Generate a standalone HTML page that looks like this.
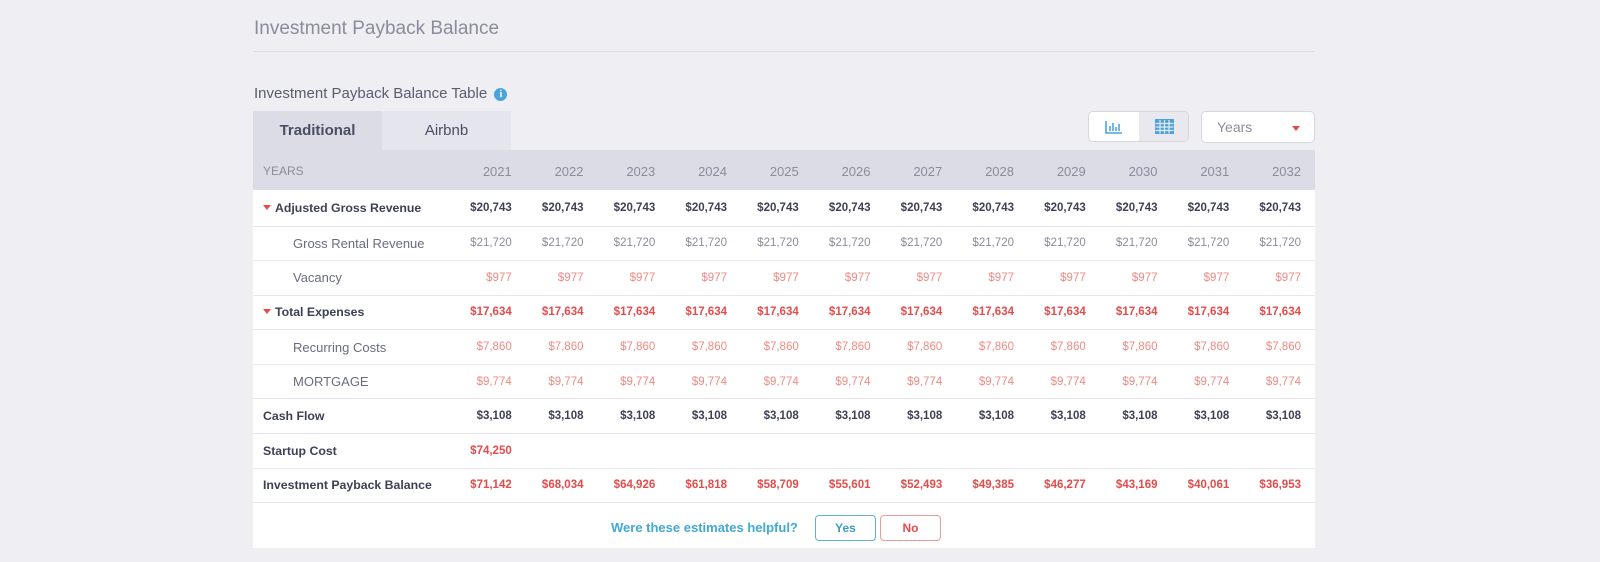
<!DOCTYPE html>
<html><head><meta charset="utf-8"><style>
*{margin:0;padding:0;box-sizing:border-box}
body{width:1600px;height:562px;background:#eeeef3;font-family:"Liberation Sans",sans-serif;position:relative;overflow:hidden;color:#4a4d63}
.h1{position:absolute;left:254px;top:18px;font-size:19px;color:#8a8c9c}
.hr{position:absolute;left:253px;top:51px;width:1062px;height:1px;background:#dcdce2}
.h2{position:absolute;left:254px;top:85px;font-size:15px;color:#5a5c70}
.info{display:inline-block;width:13px;height:13px;border-radius:50%;background:#4aa3dd;color:#fff;font-size:10px;font-weight:bold;text-align:center;line-height:13px;vertical-align:1px;margin-left:3px;font-family:"Liberation Serif",serif}
.tab{position:absolute;top:111px;height:39px;width:129px;text-align:center;line-height:39px;font-size:15px}
.t1{left:253px;background:#dcdce6;font-weight:bold;color:#4a4d63}
.t2{left:382px;background:#e5e5ed;color:#4a4d63}
.tg{position:absolute;left:1088px;top:111px;width:101px;height:31px;border:1px solid #d6d6de;border-radius:5px;background:#fff;overflow:hidden}
.tg .b{position:absolute;left:50px;top:0;width:51px;height:31px;background:#e8e8ee}
.sel{position:absolute;left:1201px;top:111px;width:114px;height:32px;border:1px solid #d6d6de;border-radius:5px;background:#fff;font-size:14px;color:#8a8c9c;line-height:30px;padding-left:15px}
.sel:after{content:"";position:absolute;right:14px;top:14px;border:4px solid transparent;border-top:5px solid #e64b4b}
table{position:absolute;left:253px;top:150px;width:1062px;border-collapse:collapse;background:#fff;table-layout:fixed}
td{height:34.6px;border-bottom:1px solid #e6e6ec;font-size:11.5px;text-align:right;font-weight:bold;color:#3e4156;white-space:nowrap}
td:first-child{text-align:left;padding-left:10px;font-size:12.3px;width:187px}
td:last-child{padding-right:14px;width:85.75px}
tr.hd td{background:#dcdce6;height:40px;font-weight:normal;color:#8a8c9c;font-size:13px;border:none;padding-top:2px}
tr.hd td:first-child{font-size:12px}
tr.first td{height:36px}
.sub td{font-weight:normal;color:#8a8c9c}
.sub td:first-child{padding-left:40px;color:#6a6c80;font-size:13px}
.red td{color:#e64b4b}.red td:first-child{color:#3e4156}
.lred td{color:#f08a84}
.tri{display:inline-block;border:4px solid transparent;border-top:5px solid #e64b4b;vertical-align:-2px;margin-right:4px}
.foot{position:absolute;left:253px;top:503px;width:1062px;height:45px;background:#fff}
.q{position:absolute;left:611px;top:520px;font-size:13px;font-weight:bold;color:#40a9d6}
.btn{position:absolute;top:515px;width:61px;height:26px;border-radius:4px;font-size:12px;font-weight:bold;text-align:center;line-height:24px}
.yes{left:815px;border:1px solid #5ab8c8;color:#3a9cc8}
.no{left:880px;border:1px solid #ee9a96;color:#e64b4b}
</style></head><body>
<div class="h1">Investment Payback Balance</div>
<div class="hr"></div>
<div class="h2">Investment Payback Balance Table <span class="info">i</span></div>
<div class="tab t1">Traditional</div><div class="tab t2">Airbnb</div>
<div class="tg"><svg style="position:absolute;left:16px;top:8px" width="18" height="14" viewBox="0 0 18 14"><path d="M1 1V13H17M5 11V6M8 11V3M11 11V7M14 11V4" stroke="#4aa3dd" stroke-width="1.6" fill="none"/></svg><div class="b"><svg style="position:absolute;left:16px;top:7px" width="19" height="15" viewBox="0 0 19 15"><rect x="0" y="0" width="19" height="15" fill="#4aa3dd"/><path d="M0.5 4.5H18.5M0.5 8H18.5M0.5 11.5H18.5M5 1V14.5M9.5 1V14.5M14 1V14.5" stroke="#e8e8ee" stroke-width="1.2"/></svg></div></div>
<div class="sel">Years</div>
<table>
<tr class="hd"><td>YEARS</td><td>2021</td><td>2022</td><td>2023</td><td>2024</td><td>2025</td><td>2026</td><td>2027</td><td>2028</td><td>2029</td><td>2030</td><td>2031</td><td>2032</td></tr>
<tr class="first"><td><span class="tri"></span>Adjusted Gross Revenue</td><td>$20,743</td><td>$20,743</td><td>$20,743</td><td>$20,743</td><td>$20,743</td><td>$20,743</td><td>$20,743</td><td>$20,743</td><td>$20,743</td><td>$20,743</td><td>$20,743</td><td>$20,743</td></tr>
<tr class="sub"><td>Gross Rental Revenue</td><td>$21,720</td><td>$21,720</td><td>$21,720</td><td>$21,720</td><td>$21,720</td><td>$21,720</td><td>$21,720</td><td>$21,720</td><td>$21,720</td><td>$21,720</td><td>$21,720</td><td>$21,720</td></tr>
<tr class="sub lred"><td>Vacancy</td><td>$977</td><td>$977</td><td>$977</td><td>$977</td><td>$977</td><td>$977</td><td>$977</td><td>$977</td><td>$977</td><td>$977</td><td>$977</td><td>$977</td></tr>
<tr class="red"><td><span class="tri"></span>Total Expenses</td><td>$17,634</td><td>$17,634</td><td>$17,634</td><td>$17,634</td><td>$17,634</td><td>$17,634</td><td>$17,634</td><td>$17,634</td><td>$17,634</td><td>$17,634</td><td>$17,634</td><td>$17,634</td></tr>
<tr class="sub lred"><td>Recurring Costs</td><td>$7,860</td><td>$7,860</td><td>$7,860</td><td>$7,860</td><td>$7,860</td><td>$7,860</td><td>$7,860</td><td>$7,860</td><td>$7,860</td><td>$7,860</td><td>$7,860</td><td>$7,860</td></tr>
<tr class="sub lred"><td>MORTGAGE</td><td>$9,774</td><td>$9,774</td><td>$9,774</td><td>$9,774</td><td>$9,774</td><td>$9,774</td><td>$9,774</td><td>$9,774</td><td>$9,774</td><td>$9,774</td><td>$9,774</td><td>$9,774</td></tr>
<tr><td>Cash Flow</td><td>$3,108</td><td>$3,108</td><td>$3,108</td><td>$3,108</td><td>$3,108</td><td>$3,108</td><td>$3,108</td><td>$3,108</td><td>$3,108</td><td>$3,108</td><td>$3,108</td><td>$3,108</td></tr>
<tr class="red"><td>Startup Cost</td><td>$74,250</td><td></td><td></td><td></td><td></td><td></td><td></td><td></td><td></td><td></td><td></td><td></td></tr>
<tr class="red"><td>Investment Payback Balance</td><td>$71,142</td><td>$68,034</td><td>$64,926</td><td>$61,818</td><td>$58,709</td><td>$55,601</td><td>$52,493</td><td>$49,385</td><td>$46,277</td><td>$43,169</td><td>$40,061</td><td>$36,953</td></tr>
</table>
<div class="foot"></div>
<div class="q">Were these estimates helpful?</div>
<div class="btn yes">Yes</div><div class="btn no">No</div>
</body></html>
